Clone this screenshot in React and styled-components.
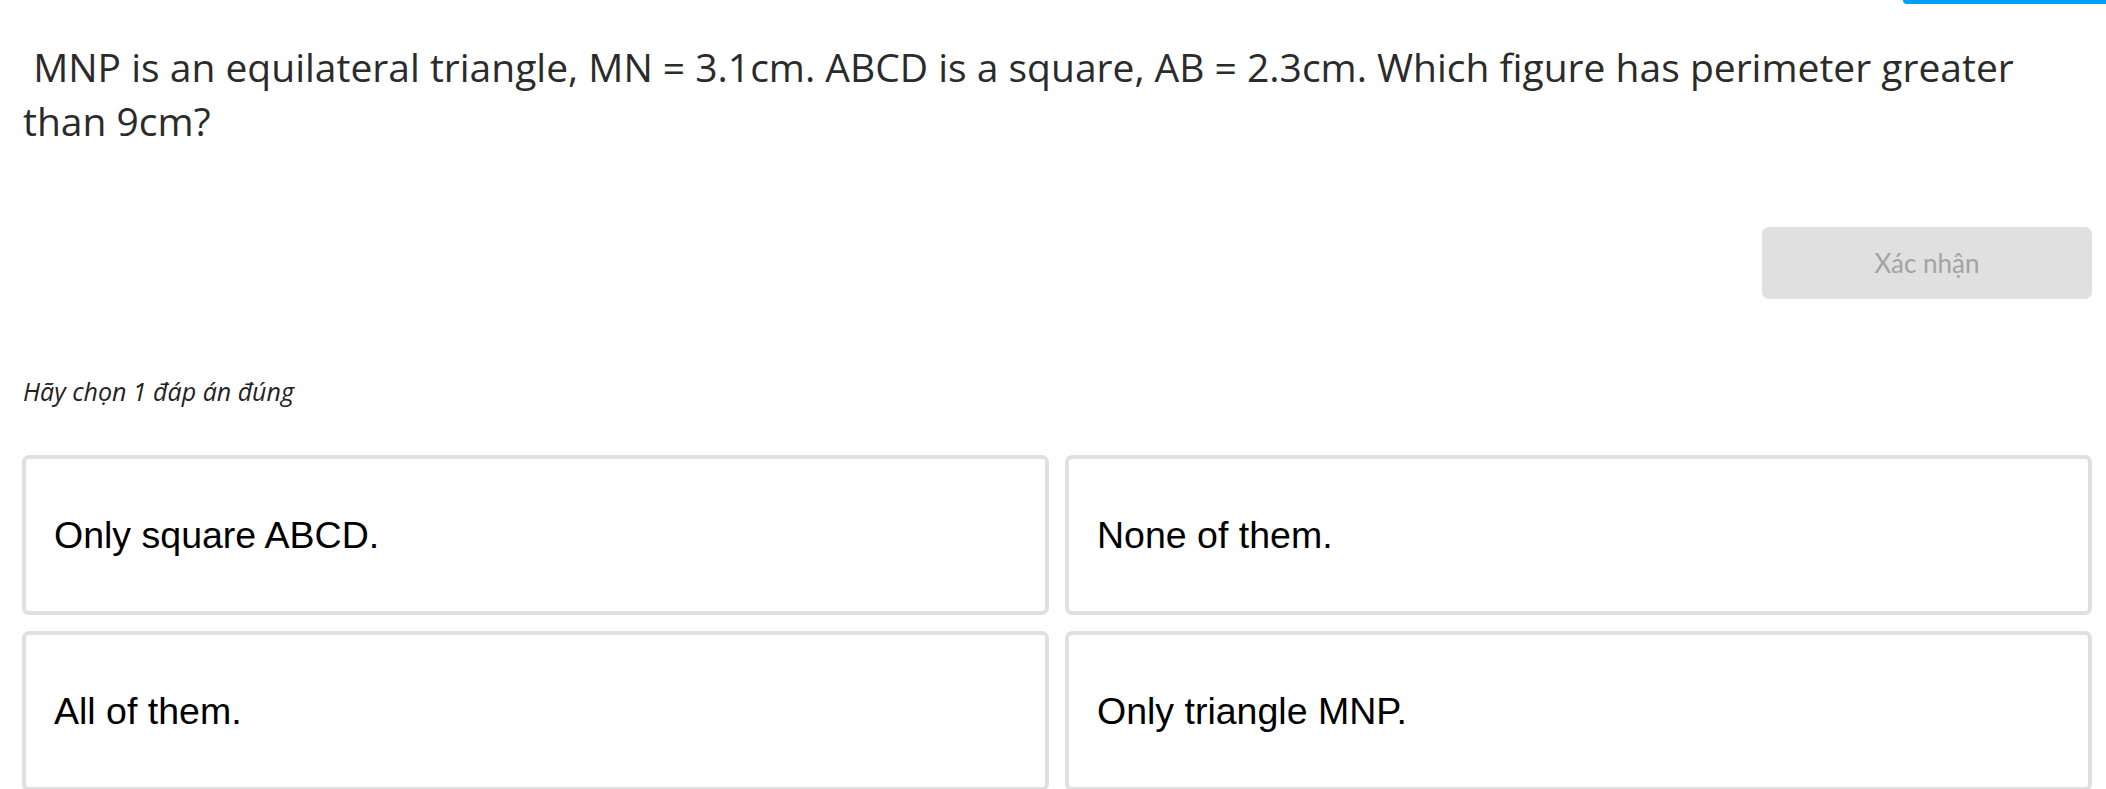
import styled, { createGlobalStyle } from "styled-components";

const GlobalStyle = createGlobalStyle`
	* {
		box-sizing: border-box;
	}
	body {
		margin: 0;
		background: #ffffff;
		font-family: "Open Sans", "Noto Sans", sans-serif;
	}
`;

const Page = styled.div`
	width: 2106px;
	height: 789px;
	overflow: hidden;
	display: flex;
	flex-direction: column;
`;

const TopStrip = styled.div`
	display: flex;
	justify-content: flex-end;
	height: 4px;
`;

const TopTab = styled.div`
	width: 203px;
	height: 4px;
	background: #02a0f6;
	border-bottom-left-radius: 14px;
`;

const Content = styled.main`
	display: flex;
	flex-direction: column;
	padding: 0 14px 0 22px;
`;

const Question = styled.p`
	margin: 36px 0 0;
	padding-left: 1px;
	font-size: 39px;
	line-height: 54px;
	color: #2b2b2b;
	white-space: pre-wrap;
`;

const Actions = styled.div`
	display: flex;
	justify-content: flex-end;
	margin-top: 79px;
`;

const ConfirmButton = styled.button`
	width: 330px;
	height: 72px;
	border: none;
	border-radius: 7px;
	background: #e0e0e0;
	color: #a3a3a3;
	font-family: "Lato", "Noto Sans", sans-serif;
	font-size: 26px;
	cursor: not-allowed;
`;

const Hint = styled.div`
	margin-top: 77px;
	padding-left: 1px;
	font-size: 25px;
	line-height: 30px;
	font-style: italic;
	color: #222222;
`;

const Options = styled.div`
	display: grid;
	grid-template-columns: 1fr 1fr;
	grid-auto-rows: 160px;
	gap: 16px;
	margin-top: 49px;
`;

const OptionCard = styled.button`
	display: flex;
	align-items: center;
	padding: 0 28px;
	border: 4px solid #e0e0e0;
	border-radius: 7px;
	background: #ffffff;
	text-align: left;
	font-family: "Liberation Sans", Arial, sans-serif;
	font-size: 37.5px;
	color: #000000;
	cursor: pointer;
`;

const options = ["Only square ABCD.", "None of them.", "All of them.", "Only triangle MNP."];

export default function App() {
	return (
		<>
			<GlobalStyle />
			<Page>
				<TopStrip>
					<TopTab />
				</TopStrip>
				<Content>
					<Question>
						{" MNP is an equilateral triangle, MN = 3.1cm. ABCD is a square, AB = 2.3cm. Which figure has perimeter greater than 9cm?"}
					</Question>
					<Actions>
						<ConfirmButton disabled>Xác nhận</ConfirmButton>
					</Actions>
					<Hint>Hãy chọn 1 đáp án đúng</Hint>
					<Options>
						{options.map((text) => (
							<OptionCard key={text}>{text}</OptionCard>
						))}
					</Options>
				</Content>
			</Page>
		</>
	);
}
